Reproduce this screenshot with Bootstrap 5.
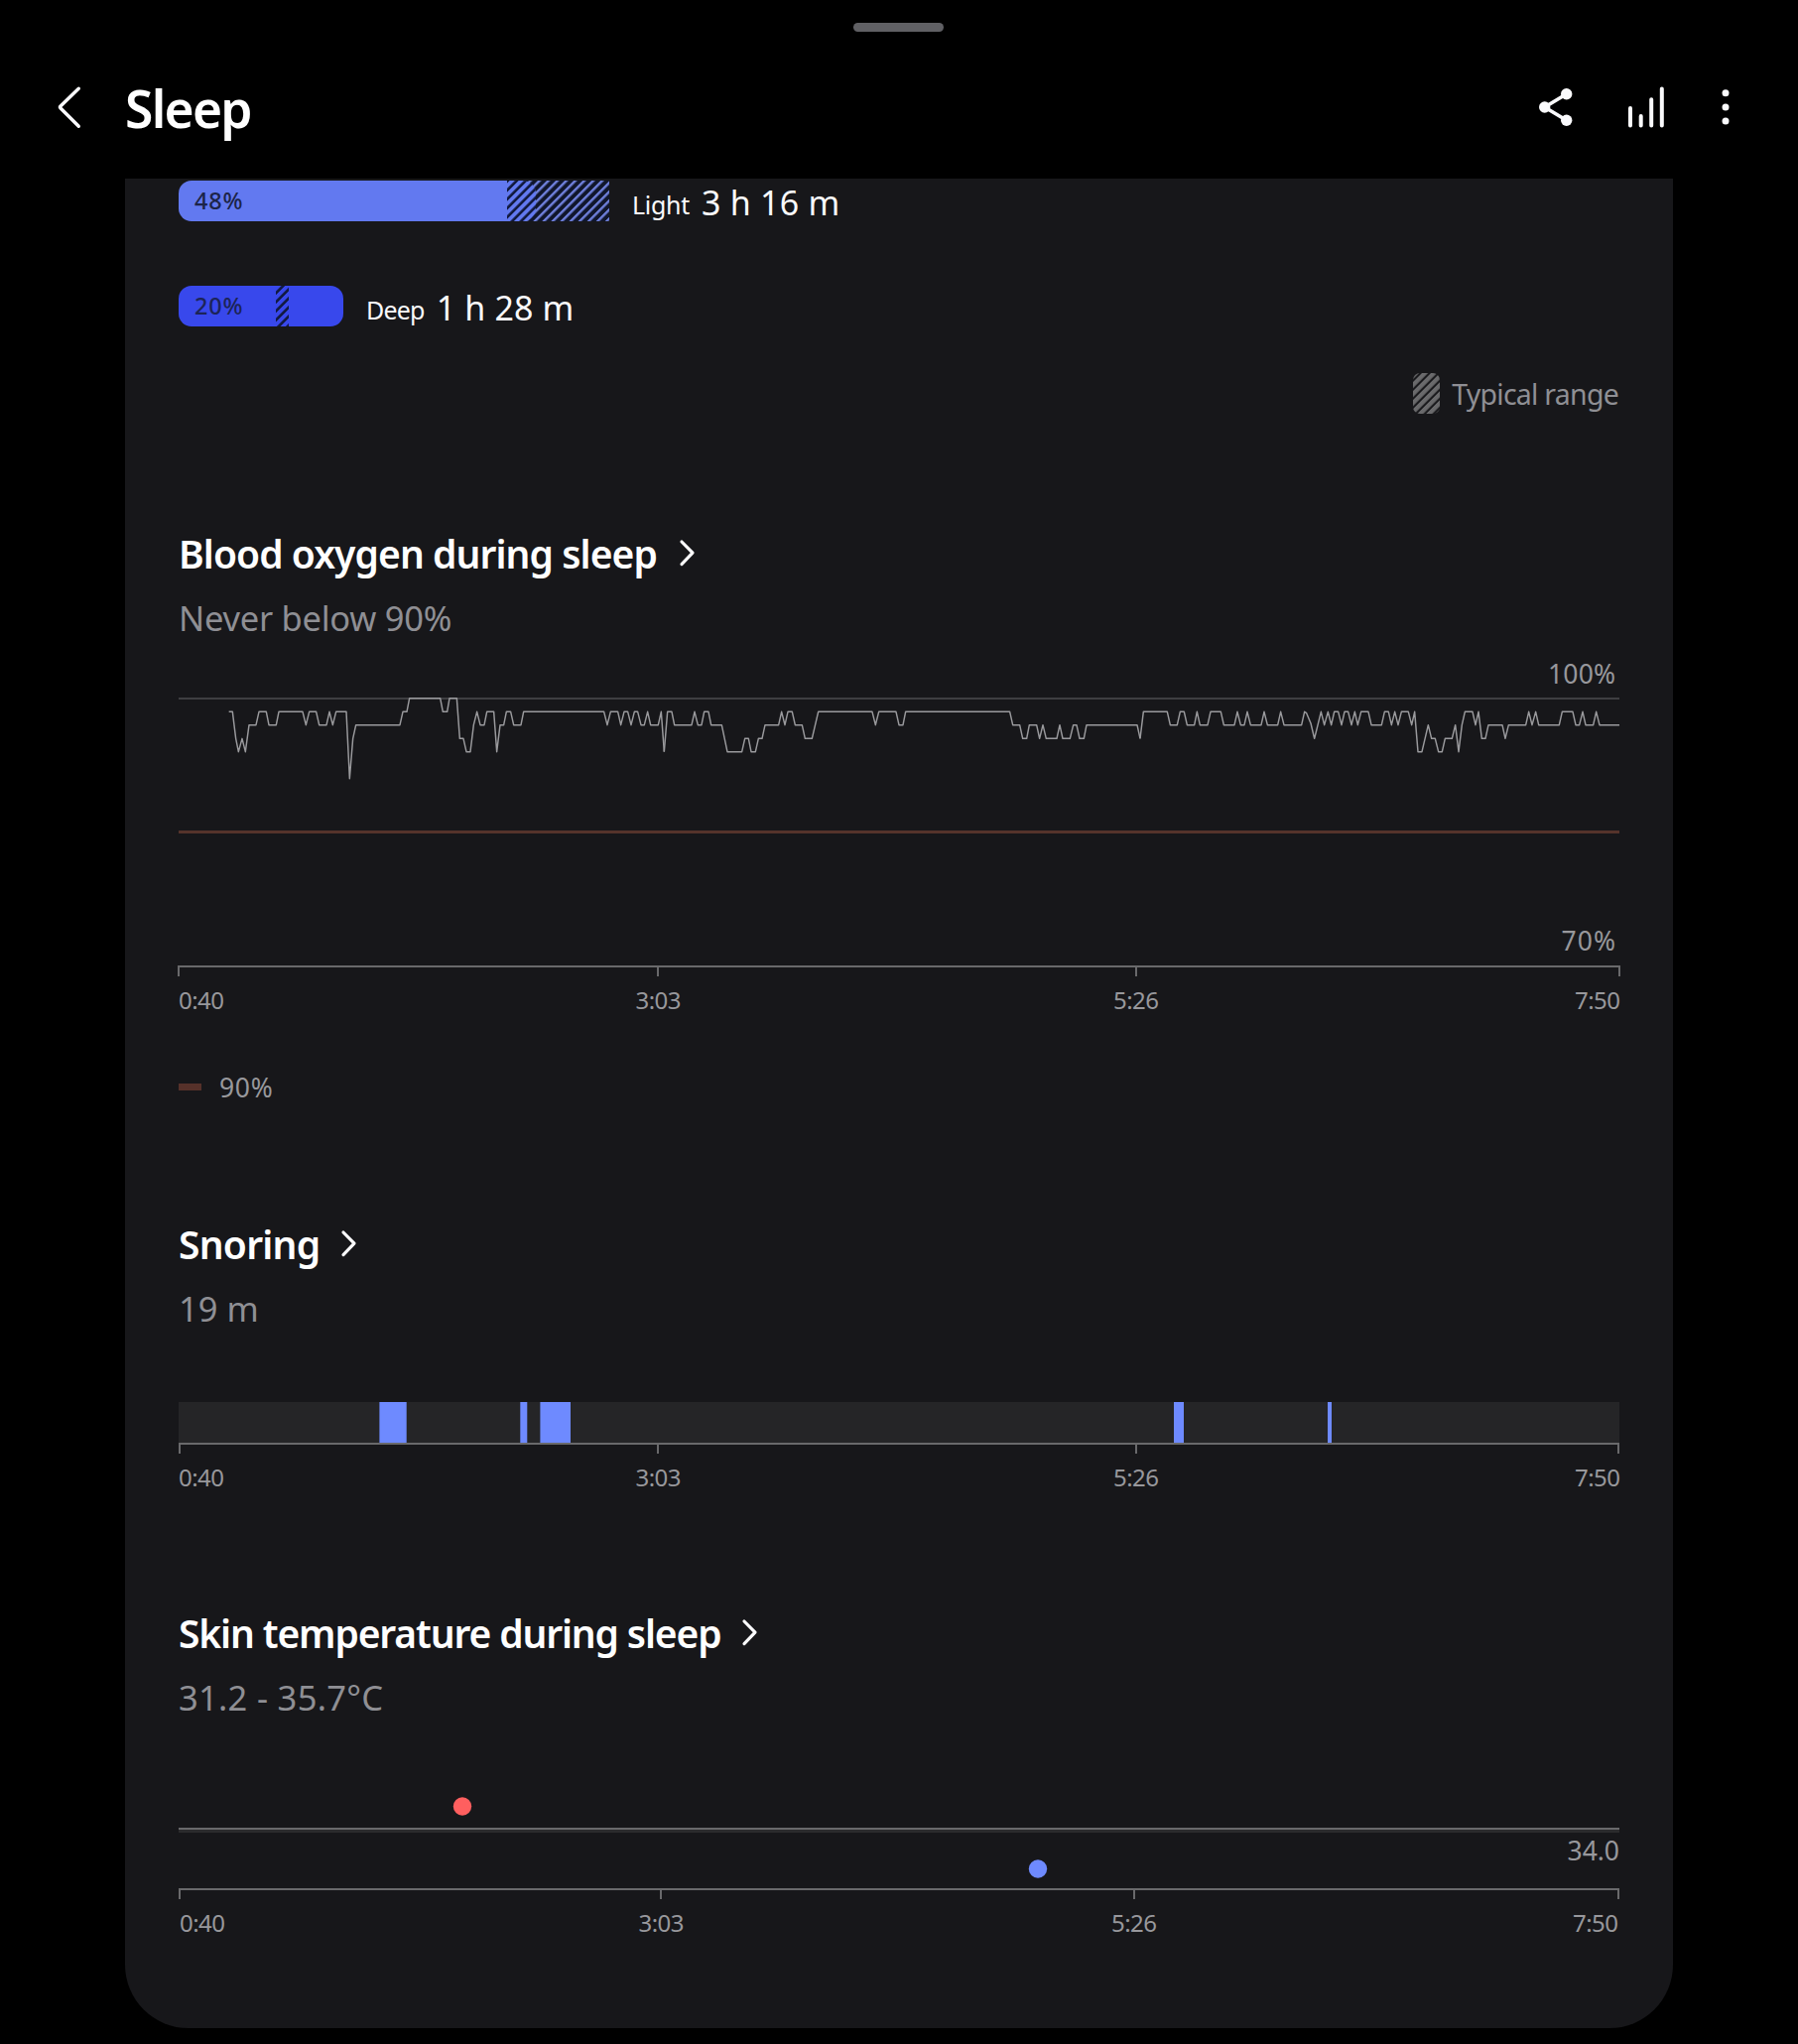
<!DOCTYPE html>
<html lang="en" data-bs-theme="dark">
<head>
<meta charset="utf-8">
<meta name="viewport" content="width=device-width, initial-scale=1">
<title>Sleep</title>
<link rel="stylesheet" href="https://cdn.jsdelivr.net/npm/bootstrap@5.3.0/dist/css/bootstrap.min.css">
<style>
body{background:#000;color:#fafafc;font-family:"Noto Sans","Open Sans",sans-serif}
svg{display:block;overflow:visible;flex:none}
.app-top{height:180px}
.grip{width:91px;height:9px;margin:23px 0 0 860px;background:#606064}
.app-bar{height:76px;margin-top:38px;padding:0 52px 0 44px}
.app-title{font-size:51.5px;font-weight:600;line-height:70px;letter-spacing:-1.7px;margin-left:32px;padding-top:1px}
.icon-btn{padding:0;border:0;background:none}
.sheet{width:1560px;height:1864px;margin-left:126px;padding:2px 54px 0;background:#17171a;border-radius:0 0 64px 64px}
.stage{height:41px}
.stage + .stage{margin-top:65px}
.stage-name{font-size:25px;line-height:41px;margin:7px 0 0 23px;letter-spacing:-.3px}
.stage-time{font-size:34px;line-height:41px;margin:4px 0 0 12px;letter-spacing:.25px}
.stage-deep .stage-name{letter-spacing:-.8px}
.stage-deep .stage-time{letter-spacing:.15px}
.range-key{height:41px;margin-top:47px;padding-right:1px;font-size:28.5px;line-height:43px;letter-spacing:-.75px;color:#8f8f94}
.metric-title{font-size:39px;font-weight:600;line-height:52px;margin:115px 0 0}
.metric-sub{font-size:34.5px;line-height:47px;height:46px;margin:15px 0 0;color:#8f8f94}
.title-arrow{margin-left:23.5px}
.oxygen .metric-title{letter-spacing:-.93px}
.oxygen .metric-sub{letter-spacing:-.27px}
.snoring .metric-title{letter-spacing:-.75px}
.snoring .title-arrow,.skin .title-arrow{margin-left:22px}
.skin .metric-title{letter-spacing:-1.14px;margin-top:110px}
.skin .metric-sub{letter-spacing:.3px}
.limit-key{height:36px;margin-top:47px;font-size:26.5px;line-height:36px;color:#98989c}
.limit-key span + span{margin-left:18px;padding-top:1px;letter-spacing:.7px}
.limit-dash{width:23px;height:7px;background:#56312a}
svg text{font-family:"Noto Sans","Open Sans",sans-serif;fill:#98989c}
.t24{font-size:24px}.t26{font-size:26.5px}
.share-pct{font-size:23.5px;font-weight:500}
</style>
<script src="https://cdn.jsdelivr.net/npm/bootstrap@5.3.0/dist/js/bootstrap.bundle.min.js"></script>
</head>
<body>
<header class="app-top overflow-hidden">
  <div class="grip rounded-pill"></div>
  <nav class="app-bar d-flex align-items-center">
    <button class="icon-btn" aria-label="Back">
      <svg width="50" height="76" viewBox="44 70 50 76" fill="none" stroke="#fafafc" stroke-width="3.4" stroke-linecap="round" stroke-linejoin="round"><path d="M79.3 89.2 61 107Q60 108 61 109L79.3 127.3"/></svg>
    </button>
    <h1 class="app-title mb-0">Sleep</h1>
    <div class="d-flex ms-auto">
      <button class="icon-btn" aria-label="Share">
        <svg width="80" height="76" viewBox="1540 70 80 76" fill="#fafafc"><path d="M1578.7 94.7 1556.7 108 1578.7 121.3" fill="none" stroke="#fafafc" stroke-width="3.6"/><circle cx="1556.7" cy="108" r="5.7"/><circle cx="1578.7" cy="94.7" r="5.7"/><circle cx="1578.7" cy="121.3" r="5.7"/></svg>
      </button>
      <button class="icon-btn" aria-label="Trends">
        <svg width="80" height="76" viewBox="1620 70 80 76" stroke="#fafafc" stroke-width="4" stroke-linecap="round"><path d="M1643 109V126.5M1653.7 117V126.5M1664.2 100.3V126.5M1674.8 89.5V126.5"/></svg>
      </button>
      <button class="icon-btn" aria-label="More options">
        <svg width="60" height="76" viewBox="1700 70 60 76" fill="#fafafc"><circle cx="1739" cy="93.8" r="3.5"/><circle cx="1739" cy="108" r="3.5"/><circle cx="1739" cy="122.1" r="3.5"/></svg>
      </button>
    </div>
  </nav>
</header>

<main class="sheet">
  <div class="stage d-flex align-items-center">
    <svg width="434" height="41" viewBox="0 0 434 41">
      <defs>
        <pattern id="hatchOut" width="6.4" height="6.4" patternUnits="userSpaceOnUse" patternTransform="rotate(45)"><rect width="6.4" height="6.4" fill="#10162c"/><rect width="2.4" height="6.4" fill="#6f80dc"/></pattern>
        <pattern id="hatchIn" width="6.4" height="6.4" patternUnits="userSpaceOnUse" patternTransform="rotate(45)"><rect x="2.9" width="2.6" height="6.4" fill="#10183c"/></pattern>
        <pattern id="hatchKey" width="6.4" height="6.4" patternUnits="userSpaceOnUse" patternTransform="rotate(45)"><rect width="4.3" height="6.4" fill="#6a6a6c"/></pattern>
      </defs>
      <path d="M331 0H434V41H331z" fill="url(#hatchOut)"/>
      <rect width="360" height="41" rx="13" fill="#6279f0"/>
      <path d="M331 0H347Q360 0 360 13V28Q360 41 347 41H331z" fill="url(#hatchIn)"/>
      <text class="share-pct" x="16" y="28.9" textLength="48.5" style="fill:#1c2448">48%</text>
    </svg>
    <span class="stage-name">Light</span><span class="stage-time">3 h 16 m</span>
  </div>
  <div class="stage stage-deep d-flex align-items-center">
    <svg width="166" height="41" viewBox="0 0 166 41">
      <rect width="166" height="41" rx="13" fill="#3848ec"/>
      <rect x="98" width="13" height="41" fill="url(#hatchIn)"/>
      <text class="share-pct" x="16" y="28.9" textLength="48.5" style="fill:#1c2458">20%</text>
    </svg>
    <span class="stage-name">Deep</span><span class="stage-time">1 h 28 m</span>
  </div>
  <div class="range-key d-flex justify-content-end">
    <svg class="me-2" width="27" height="41" viewBox="0 0 27 41"><rect width="27" height="41" rx="7" fill="url(#hatchKey)"/></svg>
    <span class="ms-1">Typical range</span>
  </div>

  <section class="oxygen">
    <h2 class="metric-title d-flex"><span>Blood oxygen during sleep</span>
      <svg class="title-arrow" width="16" height="52" viewBox="0 0 16 52" fill="none" stroke="#fafafc" stroke-width="3.2" stroke-linecap="round" stroke-linejoin="round"><path d="M2 14 13 25.2 2 36.6"/></svg></h2>
    <p class="metric-sub">Never below 90%</p>
    <svg width="1452" height="385" viewBox="180 645 1452 385">
      <text class="t26" x="1560" y="688.6" textLength="68">100%</text>
      <path d="M180 704H1632" stroke="#3e3e41" stroke-width="2"/>
      <path d="M180 838.5H1632" stroke="#55332b" stroke-width="3"/>
      <g fill="none" stroke="#9a9a9d" stroke-width="4.4" stroke-linejoin="round">
        <path transform="translate(170 660) scale(.33333)" d="M182 172 193 172 203 253 211 293 222 253 232 293 243 212 264 212 273 172 295 172 303 212 325 212 333 172 405 172 415 212 425 172 446 172 455 212 477 212 486 172 496 212 506 172 537 172 547 374 557 253 566 212 699 212 708 172 720 172 728 131 821 131 829 172 842 172 849 131 871 131 880 253 891 253 900 293 912 293 922 212 932 172 942 212 954 212 962 172 983 172 992 293 1002 212 1013 212 1021 172 1034 172 1043 212 1065 212 1073 172 1316 172 1326 212 1336 172 1358 172 1367 212 1377 172 1388 172 1398 212 1408 172 1418 172 1428 212 1438 212 1448 172 1457 212 1480 212 1489 172 1498 293"/>
        <path transform="translate(660 660) scale(.33333)" d="M28 293 38 172 51 172 59 212 111 212 120 172 130 212 141 212 149 172 162 172 170 212 202 212 219 293 263 293 272 253 283 253 291 293 304 293 313 253 324 253 333 212 374 212 383 172 393 212 402 172 415 172 424 212 445 212 454 253 475 253 494 172 657 172 667 212 677 172 729 172 738 212 750 212 758 172 1073 172 1082 212 1103 212 1112 253 1124 253 1132 212 1154 212 1163 253 1173 212 1183 253 1215 253 1224 212 1233 253 1255 253 1265 212 1275 212 1284 253 1297 253 1305 212 1458 212 1467 253"/>
        <path transform="translate(1140 660) scale(.33333)" d="M27 253 37 172 109 172 118 212 139 212 148 172 160 172 169 212 191 212 199 172 208 212 231 212 240 172 271 172 280 212 312 212 321 172 331 212 342 212 351 172 361 212 393 212 402 172 412 212 443 212 452 172 462 212 515 212 524 172 530 176 543 207 554 253 574 172 584 212 595 172 605 212 614 172 626 172 636 212 645 172 656 172 666 212 676 172 685 212 695 172 717 172 726 212 757 212 766 172 778 172 787 212 797 172 807 212 817 172 838 172 848 212 857 172 867 293 879 293 898 212 908 253 919 253 929 293 940 293 949 253 970 253 980 212 990 293 1000 212 1009 172 1032 172 1041 212 1050 172 1060 253 1071 253 1080 212 1122 212 1131 253 1141 212 1193 212 1202 172 1212 212 1223 172 1232 212 1294 212 1303 172 1335 172 1344 212 1355 212 1365 172 1374 212 1397 212 1406 172 1416 212 1476 212"/>
      </g>
      <text class="t26" x="1573.5" y="957.6" textLength="54.5">70%</text>
      <path d="M180 984V974H1632V984M663 974V984M1145 974V984" fill="none" stroke="#69696b" stroke-width="2"/>
      <g class="t24"><text x="180" y="1017" textLength="46">0:40</text><text x="640.5" y="1017" textLength="46">3:03</text><text x="1122" y="1017" textLength="46">5:26</text><text x="1587" y="1017" textLength="46">7:50</text></g>
    </svg>
    <div class="limit-key d-flex align-items-center"><span class="limit-dash"></span><span>90%</span></div>
  </section>

  <section class="snoring">
    <h2 class="metric-title d-flex"><span>Snoring</span>
      <svg class="title-arrow" width="16" height="52" viewBox="0 0 16 52" fill="none" stroke="#fafafc" stroke-width="3.2" stroke-linecap="round" stroke-linejoin="round"><path d="M2 14 13 25.2 2 36.6"/></svg></h2>
    <p class="metric-sub">19 m</p>
    <svg width="1452" height="169" viewBox="180 1341 1452 169">
      <path d="M180 1413H1632V1454H180z" fill="#252527"/>
      <path d="M382.4 1413h27.3v41h-27.3zM524.3 1413h7v41h-7zM544.4 1413H575v41h-30.6zM1183 1413h10v41h-10zM1338 1413h4v41h-4z" fill="#6e8aff"/>
      <path d="M181 1465V1455M1631 1455V1465M663 1455V1465M1145 1455V1465M180 1455H1632" fill="none" stroke="#69696b" stroke-width="2"/>
      <g class="t24"><text x="180" y="1498" textLength="46">0:40</text><text x="640.5" y="1498" textLength="46">3:03</text><text x="1122" y="1498" textLength="46">5:26</text><text x="1587" y="1498" textLength="46">7:50</text></g>
    </svg>
  </section>

  <section class="skin">
    <h2 class="metric-title d-flex"><span>Skin temperature during sleep</span>
      <svg class="title-arrow" width="16" height="52" viewBox="0 0 16 52" fill="none" stroke="#fafafc" stroke-width="3.2" stroke-linecap="round" stroke-linejoin="round"><path d="M2 14 13 25.2 2 36.6"/></svg></h2>
    <p class="metric-sub">31.2 - 35.7°C</p>
    <svg width="1452" height="227" viewBox="180 1733 1452 227">
      <circle cx="466" cy="1820.5" r="9.2" fill="#ff5f5f"/>
      <path d="M180 1845.5H1632" stroke="#2b2b2d" stroke-width="3"/>
      <path d="M180 1843H1632" stroke="#69696b" stroke-width="2"/>
      <text class="t26" x="1579.5" y="1874.6" textLength="52.5">34.0</text>
      <circle cx="1046" cy="1883.5" r="9.2" fill="#6e8aff"/>
      <path d="M181 1914V1904H1631V1914M666 1904V1914M1143 1904V1914" fill="none" stroke="#69696b" stroke-width="2"/>
      <g class="t24"><text x="181" y="1947" textLength="46">0:40</text><text x="643.5" y="1947" textLength="46">3:03</text><text x="1120" y="1947" textLength="46">5:26</text><text x="1585" y="1947" textLength="46">7:50</text></g>
    </svg>
  </section>
</main>
</body>
</html>
